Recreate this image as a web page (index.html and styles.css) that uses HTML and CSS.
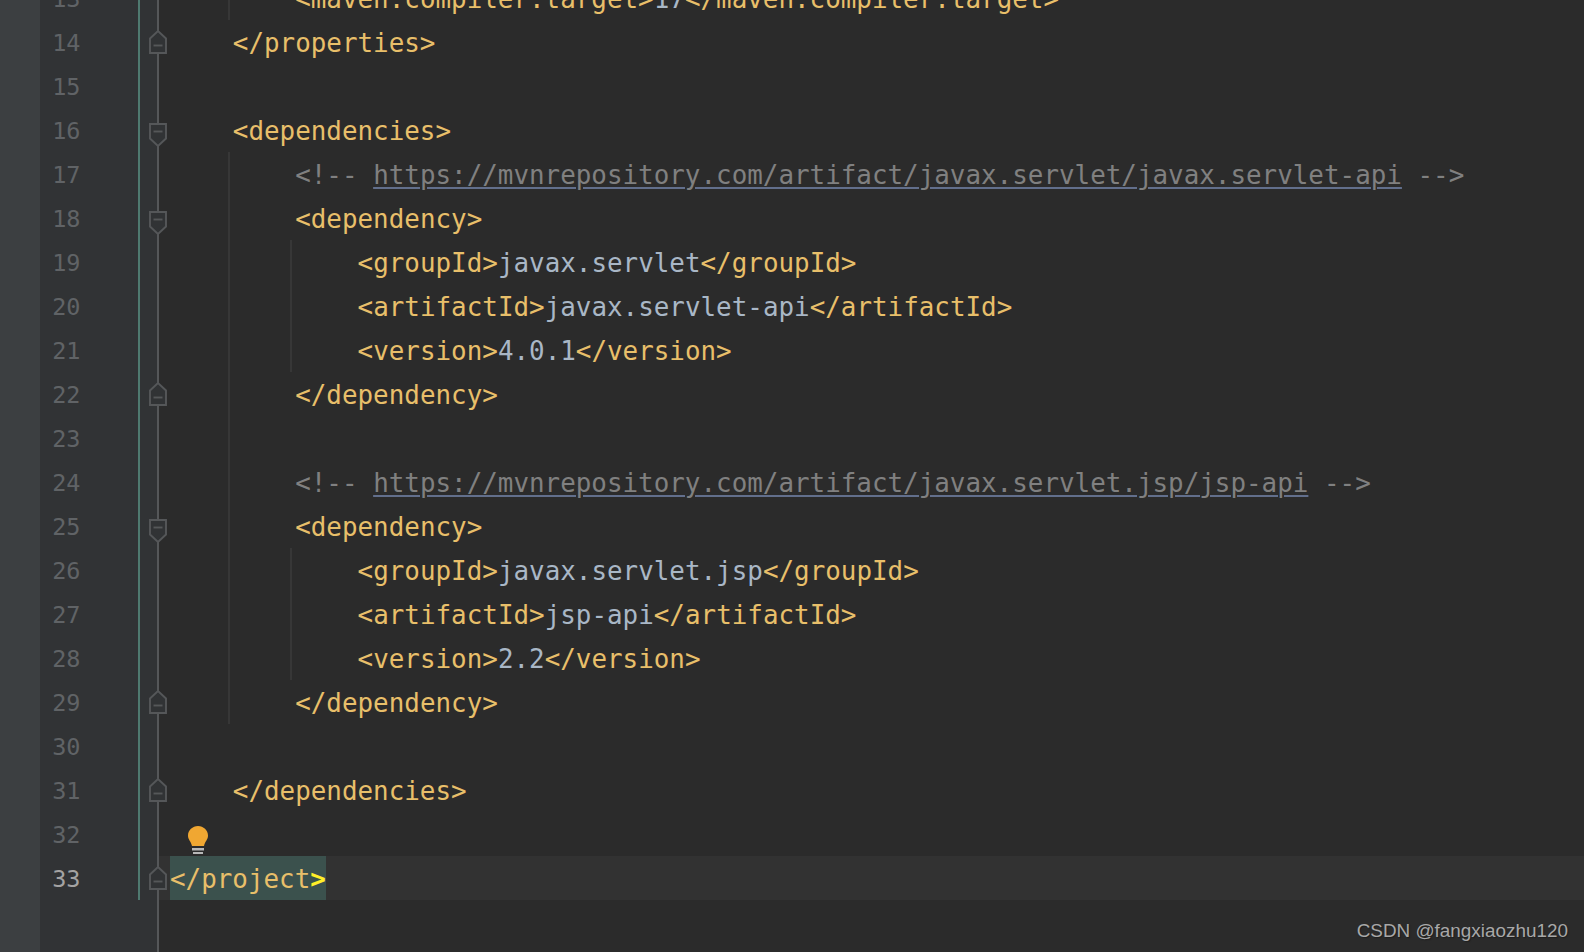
FILE: index.html
```html
<!DOCTYPE html>
<html lang="en">
<head>
<meta charset="utf-8">
<title>pom.xml</title>
<link rel="stylesheet" href="styles.css">
</head>
<body>
<svg class="defs" width="0" height="0" aria-hidden="true">
  <defs>
    <symbol id="fold-start" viewBox="0 0 18 24"><path d="M1 1H17V15.500L9 23L1 15.500Z"/><path d="M4.500 8.500H13.500"/></symbol>
    <symbol id="fold-end" viewBox="0 0 18 24"><path d="M1 23H17V8.500L9 1L1 8.500Z"/><path d="M4.500 15.500H13.500"/></symbol>
  </defs>
</svg>
<main class="ide">
  <div class="strip"></div>
  <div class="editor">
    <div class="rows">
      <div class="row"><span class="num">13</span><span class="fold"></span><span class="code i2"><span class="t">&lt;maven.compiler.target&gt;</span>17<span class="t">&lt;/maven.compiler.target&gt;</span></span></div>
      <div class="row"><span class="num">14</span><span class="fold"><svg class="end"><use href="#fold-end"/></svg></span><span class="code i1 t">&lt;/properties&gt;</span></div>
      <div class="row"><span class="num">15</span><span class="fold"></span><span class="code"></span></div>
      <div class="row"><span class="num">16</span><span class="fold"><svg class="start"><use href="#fold-start"/></svg></span><span class="code i1 t">&lt;dependencies&gt;</span></div>
      <div class="row"><span class="num">17</span><span class="fold"></span><span class="code i2 c">&lt;!-- <span class="u">https://mvnrepository.com/artifact/javax.servlet/javax.servlet-api</span> --&gt;</span></div>
      <div class="row"><span class="num">18</span><span class="fold"><svg class="start"><use href="#fold-start"/></svg></span><span class="code i2 t">&lt;dependency&gt;</span></div>
      <div class="row"><span class="num">19</span><span class="fold"></span><span class="code i3"><span class="t">&lt;groupId&gt;</span>javax.servlet<span class="t">&lt;/groupId&gt;</span></span></div>
      <div class="row"><span class="num">20</span><span class="fold"></span><span class="code i3"><span class="t">&lt;artifactId&gt;</span>javax.servlet-api<span class="t">&lt;/artifactId&gt;</span></span></div>
      <div class="row"><span class="num">21</span><span class="fold"></span><span class="code i3"><span class="t">&lt;version&gt;</span>4.0.1<span class="t">&lt;/version&gt;</span></span></div>
      <div class="row"><span class="num">22</span><span class="fold"><svg class="end"><use href="#fold-end"/></svg></span><span class="code i2 t">&lt;/dependency&gt;</span></div>
      <div class="row"><span class="num">23</span><span class="fold"></span><span class="code"></span></div>
      <div class="row"><span class="num">24</span><span class="fold"></span><span class="code i2 c">&lt;!-- <span class="u">https://mvnrepository.com/artifact/javax.servlet.jsp/jsp-api</span> --&gt;</span></div>
      <div class="row"><span class="num">25</span><span class="fold"><svg class="start"><use href="#fold-start"/></svg></span><span class="code i2 t">&lt;dependency&gt;</span></div>
      <div class="row"><span class="num">26</span><span class="fold"></span><span class="code i3"><span class="t">&lt;groupId&gt;</span>javax.servlet.jsp<span class="t">&lt;/groupId&gt;</span></span></div>
      <div class="row"><span class="num">27</span><span class="fold"></span><span class="code i3"><span class="t">&lt;artifactId&gt;</span>jsp-api<span class="t">&lt;/artifactId&gt;</span></span></div>
      <div class="row"><span class="num">28</span><span class="fold"></span><span class="code i3"><span class="t">&lt;version&gt;</span>2.2<span class="t">&lt;/version&gt;</span></span></div>
      <div class="row"><span class="num">29</span><span class="fold"><svg class="end"><use href="#fold-end"/></svg></span><span class="code i2 t">&lt;/dependency&gt;</span></div>
      <div class="row"><span class="num">30</span><span class="fold"></span><span class="code"></span></div>
      <div class="row"><span class="num">31</span><span class="fold"><svg class="end"><use href="#fold-end"/></svg></span><span class="code i1 t">&lt;/dependencies&gt;</span></div>
      <div class="row"><span class="num">32</span><span class="fold"></span><span class="code bulb-line">
        <svg class="bulb" width="22" height="30" viewBox="0 0 22 30"><path class="bulb-glass" d="M11 1C5.500 1 1 5.300 1 10.500C1 14.500 3.800 16 5 21H17C18.200 16 21 14.500 21 10.500C21 5.300 16.500 1 11 1Z"/><rect class="bulb-base" x="5" y="23" width="12" height="2.500"/><rect class="bulb-base" x="6" y="27" width="10" height="2"/></svg>
      </span></div>
      <div class="row current"><span class="num">33</span><span class="fold"><svg class="end"><use href="#fold-end"/></svg></span><span class="code"><span class="match"><span class="t">&lt;/project</span><b class="brace">&gt;</b></span></span></div>
    </div>
    <div class="guide g1"></div>
    <div class="guide g2"></div>
    <div class="guide g3"></div>
    <div class="guide g4"></div>
  </div>
  <div class="watermark">CSDN @fangxiaozhu120</div>
</main>
</body>
</html>
```

FILE: styles.css
```css
* { box-sizing: border-box; }
html, body { margin: 0; padding: 0; height: 100%; overflow: hidden; background: #2b2b2b; }
.defs { position: absolute; }

.ide { position: relative; display: flex; width: 1584px; height: 952px; overflow: hidden; font-family: "DejaVu Sans Mono", "Liberation Mono", monospace; }
.strip { width: 40px; flex: none; background: #3c3f41; }

.editor {
  position: relative;
  flex: 1;
  background: linear-gradient(to right, #313335 0, #313335 119px, #2b2b2b 119px);
}
.editor::before {
  content: "";
  position: absolute;
  left: 117px; top: 0; bottom: 0;
  width: 2px;
  background: #555759;
}
.rows { position: relative; margin-top: -24px; }
.row { display: flex; height: 44px; }
.num {
  width: 98px; flex: none;
  padding: 0 58px 0 0;
  text-align: right;
  font-size: 23.500px;
  line-height: 47px;
  color: #606366;
  letter-spacing: -.3px;
}
.fold {
  position: relative;
  display: flex;
  justify-content: flex-end;
  width: 20px; flex: none;
  border-left: 2px solid #4f7a70;
}
.fold svg { position: absolute; left: 9px; width: 18px; height: 24px; fill: #313335; stroke: #555759; stroke-width: 1.9; }
.fold .start { top: 15px; }
.fold .end { top: 9.500px; }
.code {
  flex: 1;
  margin-left: 12px;
  font-size: 25.900px;
  line-height: 47px;
  white-space: pre;
  color: #a9b7c6;
}
.i1 { padding-left: 62.800px; }
.i2 { padding-left: 125.200px; }
.i3 { padding-left: 187.600px; }
.t { color: #e8bf6a; }
.c { color: #808080; }
.u { text-decoration: underline; text-decoration-color: #626f8c; text-decoration-thickness: 2px; text-underline-offset: 3px; }
.bulb-line { position: relative; }
.bulb { position: absolute; left: 17px; top: 13px; }
.bulb-glass { fill: #f0a732; }
.bulb-base { fill: #b8b8b8; }

.current .fold { width: 21px; }
.current .code { background: #323232; margin-left: 0; padding-left: 11px; }
.current .num { color: #a4a3a3; }
.match { display: inline-block; height: 44px; background: #3b514d; }
.brace { color: #ffef28; font-weight: 700; }

.guide { position: absolute; width: 2px; background: #373737; }
.g1 { left: 188px; top: 0; height: 20px; }
.g2 { left: 188px; top: 152px; height: 572px; }
.g3 { left: 250px; top: 240px; height: 132px; }
.g4 { left: 250px; top: 548px; height: 132px; }

.watermark {
  position: absolute;
  right: 16px; top: 920px;
  font-family: "Liberation Sans", Arial, sans-serif;
  font-size: 18.900px;
  line-height: 22px;
  color: #a8a8a8;
  text-shadow: 1px 1px 1px #1e1e1e;
}
```
